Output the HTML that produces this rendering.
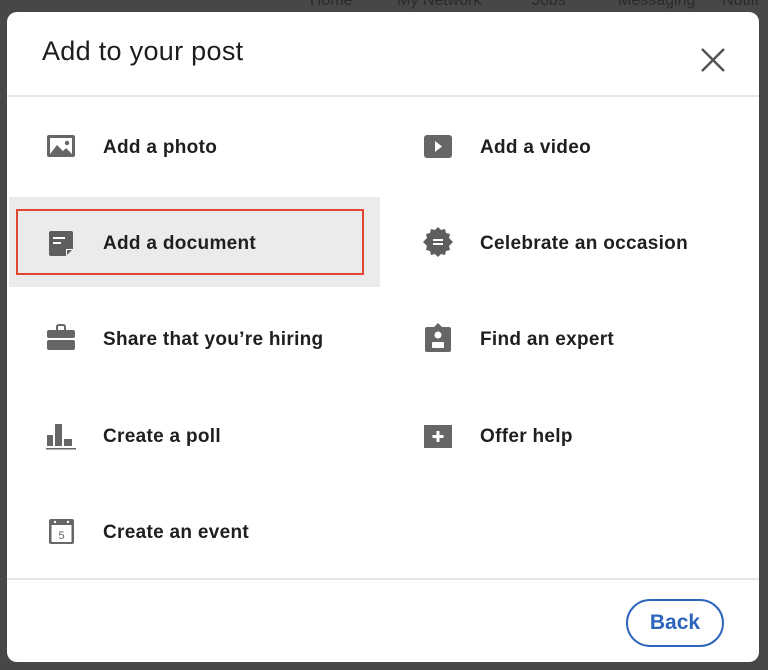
<!DOCTYPE html>
<html><head><style>
body{margin:0;width:768px;height:670px;background:#474747;position:relative;overflow:hidden;font-family:"Liberation Sans",sans-serif;}
.topnav{position:absolute;top:-8px;left:0;width:768px;color:#2a2a2a;font-size:16px;}
.topnav span{position:absolute;top:0}
.modal{position:absolute;left:7px;top:12px;width:752px;height:650px;background:#fff;border-radius:10px;overflow:hidden;}
.title{position:absolute;left:35px;top:24px;font-size:27px;letter-spacing:0.3px;color:#1d1d1d;}
.hr{position:absolute;left:0;width:752px;height:2px;background:#e6e6e6;}
.close{position:absolute;left:693px;top:35px;}
.hl{position:absolute;left:2px;top:185px;width:371px;height:90px;background:#ebebeb;}
.red{position:absolute;left:9px;top:197px;width:344px;height:62px;border:2px solid #e2462e;}
.item{position:absolute;font-size:19px;letter-spacing:0.3px;font-weight:bold;color:#1f1f1f;}
.ic{position:absolute;}
.back{position:absolute;left:619px;top:587px;width:94px;height:44px;border:2px solid #2d64bc;border-radius:24px;color:#2d64bc;font-weight:bold;font-size:21px;text-align:center;line-height:44px;}
</style></head><body>
<div class="topnav"><span style="left:310px">Home</span><span style="left:397px">My Network</span><span style="left:532px">Jobs</span><span style="left:618px">Messaging</span><span style="left:722px">Notifi</span></div>
<div class="modal">
<div class="title">Add to your post</div>
<svg class="close" width="26" height="26" viewBox="0 0 26 26"><path d="M2 2L24 24M24 2L2 24" stroke="#555" stroke-width="2.5"/></svg>
<div class="hr" style="top:83px"></div>
<div class="hl"></div><div class="red"></div>
<svg class="ic" style="left:39px;top:122px" width="30" height="24" viewBox="0 0 30 24"><rect x="1" y="1" width="28" height="22" rx="2" fill="#666"/><rect x="4" y="4" width="22" height="16" fill="#fff"/><path d="M4 20L11 11L17 17L20 14L26 20Z" fill="#666"/><circle cx="21" cy="9" r="2.2" fill="#666"/></svg>
<div class="item" style="left:96px;top:125px">Add a photo</div>
<svg class="ic" style="left:40px;top:218px" width="28" height="28" viewBox="0 0 28 28"><path d="M2 3Q2 1 4 1H24Q26 1 26 3V19L19 26H4Q2 26 2 24Z" fill="#5e5e5e"/><path d="M19 26V19H26Z" fill="#fff"/><path d="M20 25V20H25" fill="#5e5e5e"/><rect x="6" y="7" width="12" height="2" fill="#fff"/><rect x="6" y="12" width="8" height="2" fill="#fff"/></svg>
<div class="item" style="left:96px;top:221px">Add a document</div>
<svg class="ic" style="left:39px;top:312px" width="30" height="28" viewBox="0 0 30 28"><path d="M11 6V3Q11 1 13 1H17Q19 1 19 3V6" stroke="#666" stroke-width="2" fill="none"/><rect x="1" y="6" width="28" height="8" rx="2" fill="#666"/><rect x="1" y="16" width="28" height="10" rx="2" fill="#666"/></svg>
<div class="item" style="left:96px;top:317px">Share that you’re hiring</div>
<svg class="ic" style="left:38px;top:410px" width="32" height="28" viewBox="0 0 32 28"><rect x="2" y="13" width="6" height="11" fill="#666"/><rect x="10" y="2" width="7" height="22" fill="#666"/><rect x="19" y="17" width="8" height="7" fill="#666"/><rect x="1" y="26" width="30" height="1.5" fill="#666"/></svg>
<div class="item" style="left:96px;top:414px">Create a poll</div>
<svg class="ic" style="left:41px;top:506px" width="28" height="28" viewBox="0 0 28 28"><rect x="1" y="1" width="25" height="25" rx="2" fill="#666"/><rect x="3.5" y="7" width="20" height="17" fill="#fff"/><circle cx="7" cy="4" r="1.2" fill="#fff"/><circle cx="20" cy="4" r="1.2" fill="#fff"/><text x="13.5" y="21" font-size="11" text-anchor="middle" fill="#666" font-family="Liberation Sans">5</text></svg>
<div class="item" style="left:96px;top:510px">Create an event</div>
<svg class="ic" style="left:416px;top:122px" width="30" height="25" viewBox="0 0 30 25"><rect x="1" y="1" width="28" height="23" rx="3" fill="#666"/><path d="M12 7L19 12.5L12 18Z" fill="#fff"/></svg>
<div class="item" style="left:473px;top:125px">Add a video</div>
<svg class="ic" style="left:415px;top:214px" width="32" height="32" viewBox="0 0 32 32"><path d="M16 1L19 4L23 3L24 7L28 8L27 12L31 16L27 20L28 24L24 25L23 29L19 28L16 31L13 28L9 29L8 25L4 24L5 20L1 16L5 12L4 8L8 7L9 3L13 4Z" fill="#5e5e5e"/><rect x="11" y="13" width="10" height="2" fill="#fff"/><rect x="11" y="17" width="10" height="2" fill="#fff"/></svg>
<div class="item" style="left:473px;top:221px">Celebrate an occasion</div>
<svg class="ic" style="left:417px;top:310px" width="28" height="32" viewBox="0 0 28 32"><path d="M3 5H10L14 1L18 5H25Q27 5 27 7V28Q27 30 25 30H3Q1 30 1 28V7Q1 5 3 5Z" fill="#666"/><circle cx="14" cy="13" r="3.5" fill="#fff"/><rect x="8" y="20" width="12" height="6" rx="1" fill="#fff"/></svg>
<div class="item" style="left:473px;top:317px">Find an expert</div>
<svg class="ic" style="left:416px;top:412px" width="30" height="25" viewBox="0 0 30 25"><rect x="1" y="1" width="28" height="23" fill="#666"/><path d="M15 7V18M9.5 12.5H20.5" stroke="#fff" stroke-width="3"/></svg>
<div class="item" style="left:473px;top:414px">Offer help</div>
<div class="hr" style="top:566px"></div>
<div class="back">Back</div>
</div>
</body></html>
